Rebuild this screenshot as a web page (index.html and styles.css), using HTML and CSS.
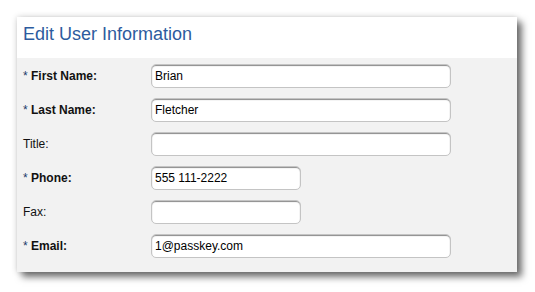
FILE: index.html
```html
<!DOCTYPE html>
<html>
<head>
<meta charset="utf-8">
<link rel="stylesheet" href="styles.css">
</head>
<body>
<div class="panel">
  <div class="header"><h1 class="title">Edit User Information</h1></div>
  <div class="form">
    <div class="row"><label class="label req"><span class="star">*</span> First Name:</label><div class="input wide">Brian</div></div>
    <div class="row"><label class="label req"><span class="star">*</span> Last Name:</label><div class="input wide">Fletcher</div></div>
    <div class="row"><label class="label">Title:</label><div class="input wide"></div></div>
    <div class="row"><label class="label req"><span class="star">*</span> Phone:</label><div class="input narrow">555 111-2222</div></div>
    <div class="row"><label class="label">Fax:</label><div class="input narrow"></div></div>
    <div class="row"><label class="label req"><span class="star">*</span> Email:</label><div class="input wide">1@passkey.com</div></div>
  </div>
</div>
</body>
</html>
```
FILE: styles.css
```css
html, body {
  margin: 0;
  padding: 0;
  background: #fff;
}
body {
  padding: 17px;
  font-family: "Liberation Sans", Arial, sans-serif;
  font-size: 12px;
  color: #111;
}
.panel {
  width: 500px;
  height: 255px;
  display: flex;
  flex-direction: column;
  box-shadow: 5px 5px 7px rgba(0,0,0,0.55), 0 0 6px rgba(0,0,0,0.18);
}
.header {
  height: 41px;
  background: #fff;
  padding-left: 6px;
  box-sizing: border-box;
}
.title {
  margin: 0;
  padding-top: 5px;
  font-size: 18px;
  font-weight: normal;
  line-height: 24px;
  color: #2d5b9e;
}
.form {
  flex: 1;
  background: #f2f2f2;
  padding: 6px 0 0 6px;
  display: flex;
  flex-direction: column;
  gap: 10px;
}
.row {
  display: flex;
  align-items: center;
  height: 24px;
}
.label {
  width: 128px;
  flex: none;
}
.label.req {
  font-weight: bold;
}
.star {
  font-weight: normal;
  color: #1c3a6a;
}
.input {
  box-sizing: border-box;
  height: 24px;
  background: #fff;
  border: 1px solid #c4c4c4;
  border-radius: 5px;
  box-shadow: inset 0 1px 1px #8a8a8a;
  padding: 1px 3px 0;
  line-height: 20px;
  color: #000;
}
.wide { width: 300px; }
.narrow { width: 150px; }
```
